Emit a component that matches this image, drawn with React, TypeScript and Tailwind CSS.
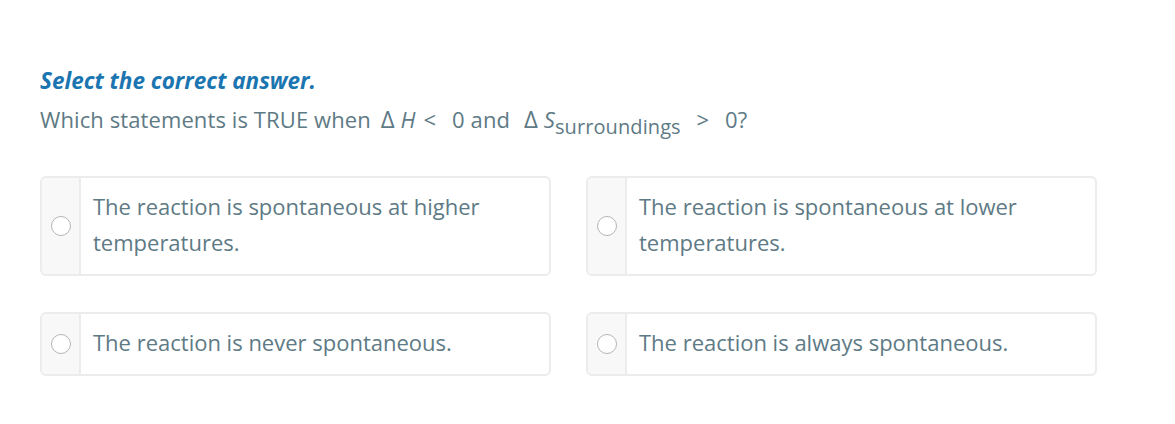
import React from 'react';

const font = { fontFamily: '"Open Sans", "Noto Sans", sans-serif' };

interface OptionProps {
  text: string;
}

const Option: React.FC<OptionProps> = ({ text }) => (
  <label className="flex rounded-md border-2 border-[#ececec] bg-white overflow-hidden cursor-pointer">
    <div className="w-[39px] shrink-0 flex items-center justify-center bg-[#f8f8f8] border-r-2 border-[#ececec]">
      <span className="w-[20px] h-[20px] rounded-full border border-[#b5b5b5] bg-white" />
    </div>
    <div className="flex-1 px-3 pt-[10px] pb-[14px] text-[22px] leading-[36px] text-[#5e7a85]">{text}</div>
  </label>
);

const App: React.FC = () => {
  return (
    <div className="w-[1175px] h-[424px] bg-white pl-[40px] pr-[78px] pt-[66px]" style={font}>
      <h2 className="text-[22.5px] leading-[30px] font-bold italic text-[#1b75b0]">Select the correct answer.</h2>
      <p className="mt-[8px] text-[22px] leading-[30px] tracking-[0.1px] text-[#5e7a85] whitespace-nowrap">
        Which statements is TRUE when <span className="ml-[4px] text-[24px]">Δ</span> <i>H</i>
        <span className="ml-[8px]">&lt;</span> <span className="ml-[10px]">0</span> and{' '}
        <span className="ml-[8px] text-[24px]">Δ</span> <i>S</i>
        <span className="relative top-[6px] text-[20px]">surroundings</span>{' '}
        <span className="ml-[10px]">&gt;</span> <span className="ml-[10px]">0?</span>
      </p>
      <div className="mt-[40px] grid grid-cols-2 gap-x-[35px] gap-y-[36px]">
        <Option text="The reaction is spontaneous at higher temperatures." />
        <Option text="The reaction is spontaneous at lower temperatures." />
        <Option text="The reaction is never spontaneous." />
        <Option text="The reaction is always spontaneous." />
      </div>
    </div>
  );
};

export default App;
